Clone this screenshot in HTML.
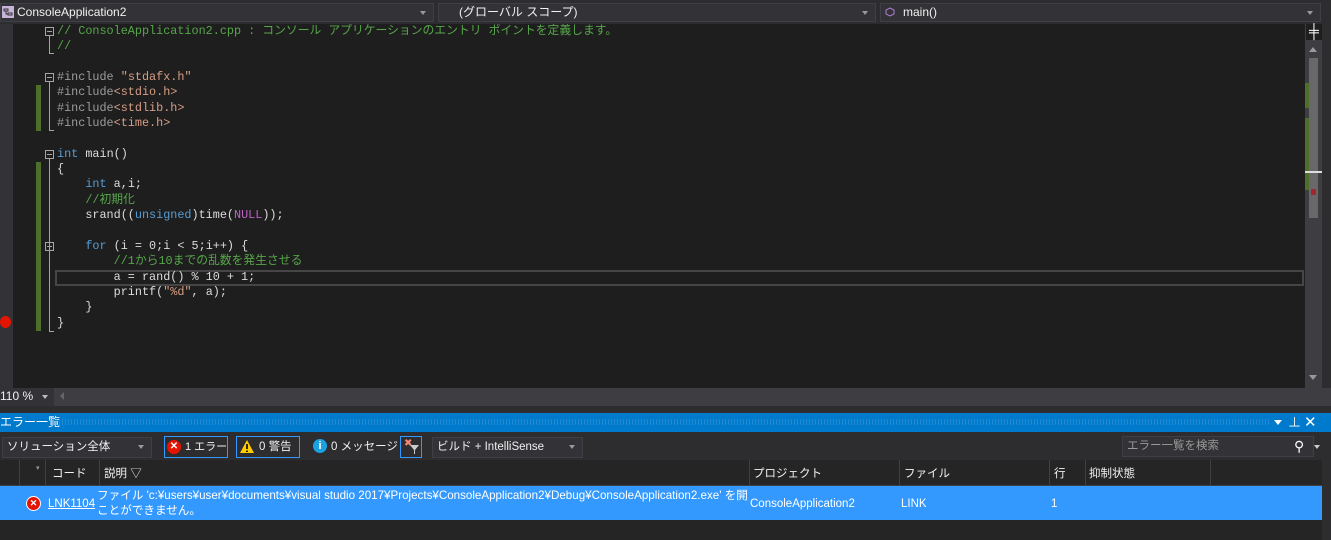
<!DOCTYPE html>
<html><head><meta charset="utf-8"><style>
*{margin:0;padding:0;box-sizing:border-box}
body{width:1331px;height:540px;background:#2d2d30;overflow:hidden;position:relative;font-family:"Liberation Sans","Noto Sans CJK JP",sans-serif;color:#f1f1f1;font-size:12px}
.abs{position:absolute}
.dd{position:absolute;top:3px;height:19px;background:#333337;border:1px solid #3f3f46;font-size:12px;line-height:17px;padding-left:4px;color:#f1f1f1}
.dd:after{content:"";position:absolute;right:7px;top:7px;border:3px solid transparent;border-top:4px solid #999}
.code{position:absolute;left:57px;width:1240px;height:360px;overflow:hidden;font-family:"Liberation Mono","Noto Sans CJK JP",monospace;font-size:11.8px;color:#dcdcdc}
.code div{height:15.35px;line-height:15.35px;white-space:pre}
.c{color:#57a64a}.k{color:#569cd6}.s{color:#d69d85}.m{color:#bd63c5}.pp{color:#9b9b9b}
.fold{position:absolute;width:9px;height:9px;border:1px solid #a5a5a5;left:45px}
.fold:after{content:"";position:absolute;left:1px;top:3px;width:5px;height:1px;background:#a5a5a5}
.vl{position:absolute;left:49px;width:1px;background:#a5a5a5}
.hl{position:absolute;left:49px;width:5px;height:1px;background:#a5a5a5}
.gm{position:absolute;left:36px;width:5px;background:#4e6f2a}
.btn{position:absolute;top:436px;height:22px;border:1px solid #3399ff;font-size:11.5px;line-height:20px;white-space:nowrap}
</style></head><body>
<div class="abs" style="left:0;top:0;width:1331px;height:24px;background:#2d2d30"></div>
<div class="dd" style="left:0;width:434px;padding-left:16px">ConsoleApplication2</div>
<svg class="abs" style="left:2px;top:6px" width="12" height="12"><rect x="0" y="0" width="12" height="12" fill="#c8b4d8"/><path d="M2 3h4v2H2zM6 7h4v2H6zM4 5v3h2" stroke="#333" fill="none"/></svg>
<div class="dd" style="left:438px;width:438px;padding-left:20px">(グローバル スコープ)</div>
<div class="dd" style="left:880px;width:441px;padding-left:22px">main()</div>
<svg class="abs" style="left:885px;top:7px" width="10" height="10"><path d="M5 1l4 2v4l-4 2-4-2V3z" fill="none" stroke="#b180d7"/></svg>
<div class="abs" style="left:0;top:24px;width:13px;height:364px;background:#333337"></div>
<div class="abs" style="left:13px;top:24px;width:1292px;height:364px;background:#1e1e1e"></div>
<div class="abs" style="left:1305px;top:24px;width:26px;height:364px;background:#3e3e42"></div>
<div class="abs" style="left:1306px;top:24px;width:16px;height:16px;background:#1e1e1e;color:#fff;font-size:14px;text-align:center;line-height:15px">╪</div>
<div class="abs" style="left:1309px;top:47px;border:4px solid transparent;border-bottom:5px solid #999;border-top:0"></div>
<div class="abs" style="left:1309px;top:58px;width:9px;height:160px;background:#686868"></div>
<div class="abs" style="left:1305px;top:83px;width:4px;height:25px;background:#4e6f2a"></div>
<div class="abs" style="left:1305px;top:118px;width:4px;height:72px;background:#4e6f2a"></div>
<div class="abs" style="left:1305px;top:171px;width:17px;height:2px;background:#ddd"></div>
<div class="abs" style="left:1311px;top:189px;width:5px;height:6px;background:#a1262d"></div>
<div class="abs" style="left:1309px;top:375px;border:4px solid transparent;border-top:5px solid #999;border-bottom:0"></div>
<div class="abs" style="left:1322px;top:24px;width:9px;height:364px;background:#2d2d30"></div>
<div class="gm" style="top:85px;height:46px"></div>
<div class="gm" style="top:162px;height:169px"></div>
<div class="fold" style="top:27px"></div><div class="vl" style="top:36px;height:17px"></div><div class="hl" style="top:53px"></div>
<div class="fold" style="top:73px"></div><div class="vl" style="top:82px;height:48px"></div><div class="hl" style="top:130px"></div>
<div class="fold" style="top:150px"></div><div class="vl" style="top:159px;height:172px"></div><div class="hl" style="top:331px"></div>
<div class="fold" style="top:242px"></div>
<div class="abs" style="left:0;top:316px;width:11px;height:12px;border-radius:50%;background:#e51400"></div>
<div class="abs" style="left:55px;top:270px;width:1249px;height:16px;border:2px solid #464646"></div>
<div class="code" style="top:24px"><div class="c">// ConsoleApplication2.cpp : コンソール アプリケーションのエントリ ポイントを定義します。</div><div class="c">//</div><div> </div><div><span class="pp">#include</span> <span class="s">"stdafx.h"</span></div><div><span class="pp">#include</span><span class="s">&lt;stdio.h&gt;</span></div><div><span class="pp">#include</span><span class="s">&lt;stdlib.h&gt;</span></div><div><span class="pp">#include</span><span class="s">&lt;time.h&gt;</span></div><div> </div><div><span class="k">int</span> main()</div><div>{</div><div>    <span class="k">int</span> a,i;</div><div class="c">    //初期化</div><div>    srand((<span class="k">unsigned</span>)time(<span class="m">NULL</span>));</div><div> </div><div>    <span class="k">for</span> (i = 0;i &lt; 5;i++) {</div><div class="c">        //1から10までの乱数を発生させる</div><div>        a = rand() % 10 + 1;</div><div>        printf(<span class="s">"%d"</span>, a);</div><div>    }</div><div>}</div></div>
<div class="abs" style="left:0;top:388px;width:1331px;height:18px;background:#3e3e42"></div>
<div class="abs" style="left:0;top:388px;width:54px;height:18px;background:#333337;line-height:17px;font-size:12px">110 %</div>
<div class="abs" style="left:42px;top:395px;border:3px solid transparent;border-top:4px solid #bbb"></div>
<div class="abs" style="left:60px;top:392px;border:4px solid transparent;border-right:4px solid #666;border-left:0"></div>
<div class="abs" style="left:0;top:406px;width:1331px;height:7px;background:#2d2d30"></div>
<div class="abs" style="left:0;top:413px;width:1331px;height:19px;background:#007acc"></div>
<div class="abs" style="left:0;top:413px;line-height:19px;font-size:12px;color:#fff">エラー一覧</div>
<div class="abs" style="left:50px;top:419px;width:1220px;height:6px;background:repeating-linear-gradient(90deg,#3d95d6 0 1px,transparent 1px 3px);opacity:.6"></div>
<div class="abs" style="left:1274px;top:420px;border:4px solid transparent;border-top:5px solid #fff"></div>
<div class="abs" style="left:1288px;top:414px;color:#fff;font-size:13px;line-height:17px">⊥</div>
<div class="abs" style="left:1304px;top:413px;color:#fff;font-size:15px;line-height:19px">✕</div>
<div class="abs" style="left:0;top:432px;width:1331px;height:28px;background:#2d2d30"></div>
<div class="dd" style="left:2px;top:437px;width:150px;height:21px;line-height:19px;font-size:11.5px">ソリューション全体</div>
<div class="btn" style="left:164px;width:64px;padding-left:20px;font-size:11px">1 エラー</div>
<div class="abs" style="left:167px;top:440px;width:14px;height:14px;border-radius:50%;background:#e51400;color:#fff;font-size:10px;text-align:center;line-height:14px;font-weight:bold">✕</div>
<div class="btn" style="left:236px;width:64px;padding-left:22px">0 警告</div>
<svg class="abs" style="left:239px;top:439px" width="16" height="15"><path d="M8 1L15 14H1z" fill="#ffcc00"/><path d="M8 5v5M8 11.5v1.5" stroke="#000" stroke-width="1.6"/></svg>
<div class="abs" style="left:313px;top:439px;width:14px;height:14px;border-radius:50%;background:#1ba1e2;color:#fff;font-size:11px;text-align:center;line-height:14px;font-weight:bold">i</div>
<div class="abs" style="left:331px;top:437px;line-height:20px;font-size:11.5px;white-space:nowrap">0 メッセージ</div>
<div class="btn" style="left:400px;width:22px"></div>
<div class="abs" style="left:404px;top:438px;color:#f48771;font-size:10px">✖</div>
<svg class="abs" style="left:410px;top:445px" width="10" height="10"><path d="M0 0h9L5 5v4H4V5z" fill="#ccc"/></svg>
<div class="dd" style="left:432px;top:437px;width:151px;height:21px;line-height:19px;font-size:11.5px">ビルド + IntelliSense</div>
<div class="abs" style="left:1122px;top:436px;width:192px;height:21px;background:#333337;border:1px solid #3f3f46;color:#999;padding-left:4px;line-height:19px;font-size:11.5px">エラー一覧を検索</div>
<div class="abs" style="left:1294px;top:437px;color:#fff;font-size:14px;line-height:18px">⚲</div>
<div class="abs" style="left:1314px;top:445px;border:3px solid transparent;border-top:4px solid #ccc"></div>
<div class="abs" style="left:0;top:460px;width:1331px;height:26px;background:#252526;border-bottom:1px solid #3f3f46"></div>
<div class="abs" style="left:19px;top:460px;width:1px;height:26px;background:#3f3f46"></div>
<div class="abs" style="left:45px;top:460px;width:1px;height:26px;background:#3f3f46"></div>
<div class="abs" style="left:99px;top:460px;width:1px;height:26px;background:#3f3f46"></div>
<div class="abs" style="left:749px;top:460px;width:1px;height:26px;background:#3f3f46"></div>
<div class="abs" style="left:899px;top:460px;width:1px;height:26px;background:#3f3f46"></div>
<div class="abs" style="left:1049px;top:460px;width:1px;height:26px;background:#3f3f46"></div>
<div class="abs" style="left:1085px;top:460px;width:1px;height:26px;background:#3f3f46"></div>
<div class="abs" style="left:1210px;top:460px;width:1px;height:26px;background:#3f3f46"></div>
<div class="abs" style="left:36px;top:464px;color:#999;font-size:7px">▾</div>
<div class="abs" style="left:52px;top:461px;line-height:26px;font-size:11.5px">コード</div>
<div class="abs" style="left:104px;top:461px;line-height:26px;font-size:11.5px">説明 ▽</div>
<div class="abs" style="left:753px;top:461px;line-height:26px;font-size:11.5px">プロジェクト</div>
<div class="abs" style="left:904px;top:461px;line-height:26px;font-size:11.5px">ファイル</div>
<div class="abs" style="left:1054px;top:461px;line-height:26px;font-size:11.5px">行</div>
<div class="abs" style="left:1089px;top:461px;line-height:26px;font-size:11.5px">抑制状態</div>
<div class="abs" style="left:0;top:486px;width:1331px;height:54px;background:#252526"></div>
<div class="abs" style="left:0;top:486px;width:1322px;height:34px;background:#3399ff"></div>
<div class="abs" style="left:26px;top:496px;width:15px;height:15px;border-radius:50%;background:#e51400;border:1px solid #fff;color:#fff;font-size:9px;text-align:center;line-height:13px;font-weight:bold">✕</div>
<div class="abs" style="left:48px;top:496px;text-decoration:underline;color:#fff;line-height:16px;font-size:11.5px">LNK1104</div>
<div class="abs" style="left:97px;top:488px;width:652px;color:#fff;line-height:15px;white-space:nowrap;overflow:hidden;font-size:11.6px">ファイル 'c:¥users¥user¥documents¥visual studio 2017¥Projects¥ConsoleApplication2¥Debug¥ConsoleApplication2.exe' を開く<br>ことができません。</div>
<div class="abs" style="left:750px;top:496px;color:#fff;line-height:16px;font-size:11.5px">ConsoleApplication2</div>
<div class="abs" style="left:901px;top:496px;color:#fff;line-height:16px;font-size:11.5px">LINK</div>
<div class="abs" style="left:1051px;top:496px;color:#fff;line-height:16px;font-size:11.5px">1</div>
<div class="abs" style="left:1322px;top:460px;width:9px;height:80px;background:#2d2d30"></div>
</body></html>
